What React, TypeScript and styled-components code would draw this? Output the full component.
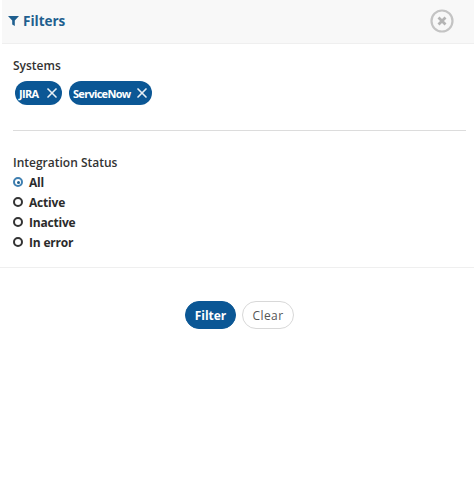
import React from "react";
import styled, { createGlobalStyle } from "styled-components";
import { X } from "lucide-react";

const GlobalStyle = createGlobalStyle`
  html, body {
    margin: 0;
    background: #fff;
    font-family: "Open Sans", "Liberation Sans", sans-serif;
  }
`;

const Panel = styled.div`
  width: 474px;
  height: 481px;
  background: #fff;
  overflow: hidden;
`;

const Header = styled.div`
  height: 41px;
  margin-left: 2px;
  padding: 0 20px 2px 6px;
  display: flex;
  align-items: center;
  justify-content: space-between;
  background: #f8f8f8;
  border-bottom: 1px solid #efefef;
`;

const Title = styled.div`
  display: flex;
  align-items: center;
  gap: 4px;
  color: #1f5f8f;
  font-size: 13.5px;
  font-weight: 700;
`;

const Section = styled.div`
  padding: 13px 8px 0 13px;
`;

const Label = styled.div`
  color: #333;
  font-size: 12px;
  font-weight: 600;
  line-height: 17px;
`;

const Chips = styled.div`
  display: flex;
  gap: 7px;
  margin: 7px 0 0 2px;
`;

const Chip = styled.div`
  height: 24px;
  min-width: 47px;
  display: flex;
  align-items: center;
  justify-content: space-between;
  gap: 3px;
  padding: 0 2px 0 4px;
  box-sizing: border-box;
  background: #0b5795;
  border-radius: 12px;
  color: #fff;
  font-size: 11px;
  font-weight: 700;
  letter-spacing: -0.7px;
`;

const Divider = styled.div`
  height: 1px;
  margin: 25px 0 23px;
  background: #dcdcdc;
`;

const Options = styled.div`
  display: flex;
  flex-direction: column;
  margin-top: 1px;
`;

const Option = styled.div`
  height: 20px;
  display: flex;
  align-items: center;
  gap: 6px;
  color: #2b2b2b;
  font-size: 12px;
  font-weight: 700;
  letter-spacing: -0.2px;
`;

const Radio = styled.span<{ $checked?: boolean }>`
  width: 6px;
  height: 6px;
  box-sizing: content-box;
  border: 2px solid ${(p) => (p.$checked ? "#3f7fb0" : "#333")};
  border-radius: 50%;
  display: flex;
  align-items: center;
  justify-content: center;

  &::after {
    content: "";
    display: ${(p) => (p.$checked ? "block" : "none")};
    width: 3px;
    height: 3px;
    border-radius: 50%;
    background: #1f5f8f;
  }
`;

const Rule = styled.div`
  height: 1px;
  margin-top: 15px;
  background: #efefef;
`;

const Actions = styled.div`
  display: flex;
  justify-content: center;
  gap: 6px;
  margin: 33px 0 0 5px;
`;

const Button = styled.button<{ $primary?: boolean }>`
  height: 28px;
  padding: 0;
  width: ${(p) => (p.$primary ? "51px" : "52px")};
  border-radius: 14px;
  border: 1px solid ${(p) => (p.$primary ? "#0b5795" : "#d8d8d8")};
  background: ${(p) => (p.$primary ? "#0b5795" : "#fff")};
  color: ${(p) => (p.$primary ? "#fff" : "#555")};
  font-family: inherit;
  font-size: 12px;
  font-weight: ${(p) => (p.$primary ? 700 : 500)};
  letter-spacing: ${(p) => (p.$primary ? "0" : "0.4px")};
`;

const FunnelIcon = () => (
  <svg width="11" height="11" viewBox="0 0 11 11">
    <path d="M0 1h11L6.8 5.6V11L4.2 9.6V5.6z" fill="#1f5f8f" />
  </svg>
);

const CloseIcon = () => (
  <svg width="24" height="24" viewBox="0 0 24 24">
    <circle cx="12" cy="12" r="10.5" fill="none" stroke="#c4c4c4" strokeWidth="2.2" />
    <path d="M8.5 8.5l7 7M15.5 8.5l-7 7" stroke="#b4b4b4" strokeWidth="2.8" />
  </svg>
);

const statuses = ["All", "Active", "Inactive", "In error"];

export default function App() {
  return (
    <Panel>
      <GlobalStyle />
      <Header>
        <Title>
          <FunnelIcon />
          Filters
        </Title>
        <CloseIcon />
      </Header>
      <Section>
        <Label>Systems</Label>
        <Chips>
          {["JIRA", "ServiceNow"].map((name) => (
            <Chip key={name}>
              {name}
              <X size={16} strokeWidth={2.5} color="#e8eff5" />
            </Chip>
          ))}
        </Chips>
        <Divider />
        <Label>Integration Status</Label>
        <Options>
          {statuses.map((s, i) => (
            <Option key={s}>
              <Radio $checked={i === 0} />
              {s}
            </Option>
          ))}
        </Options>
      </Section>
      <Rule />
      <Actions>
        <Button $primary>Filter</Button>
        <Button>Clear</Button>
      </Actions>
    </Panel>
  );
}
